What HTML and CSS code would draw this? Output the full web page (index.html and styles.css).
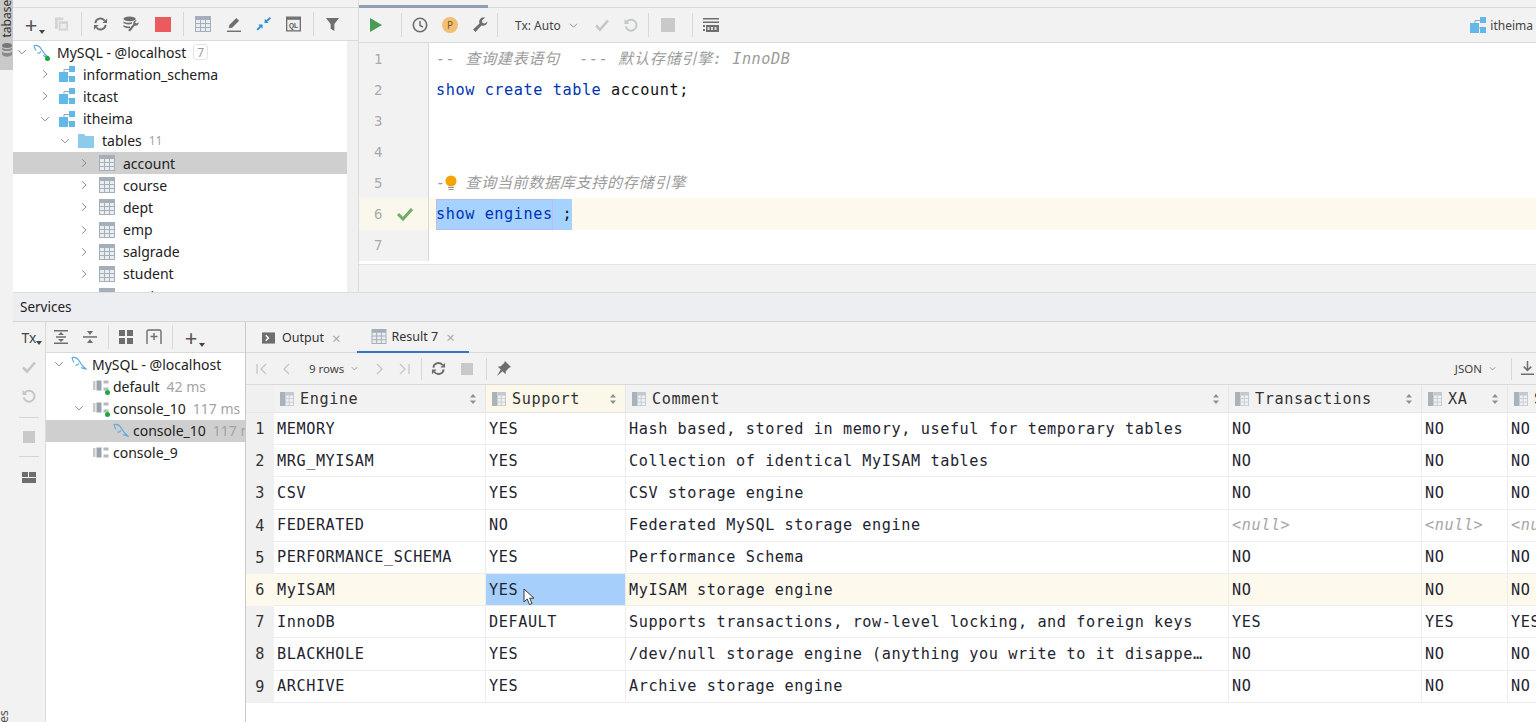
FILE: index.html
```html
<!DOCTYPE html>
<html lang="en">
<head>
<meta charset="utf-8">
<title>DataGrip</title>
<link rel="stylesheet" href="styles.css">
</head>
<body>
<svg class="sprite" width="0" height="0" aria-hidden="true">
  <symbol id="schema" viewBox="0 0 16 16">
    <path d="M5 6V3.5h6M5 11h6" fill="none" stroke="#9aa7b0" stroke-width="1"/>
    <rect x="0" y="6" width="9" height="10" fill="#62b8e8"/>
    <rect x="10" y="0" width="6" height="6" fill="#62b8e8"/>
    <rect x="10" y="10" width="6" height="6" fill="#62b8e8"/>
  </symbol>
  <symbol id="table" viewBox="0 0 16 16">
    <rect x="0" y="0" width="16" height="16" fill="#a5afb9"/>
    <path d="M1 4h4v3H1zM6 4h4v3H6zM11 4h4v3h-4zM1 8h4v3H1zM6 8h4v3H6zM11 8h4v3h-4zM1 12h4v3H1zM6 12h4v3H6zM11 12h4v3h-4z" fill="#e9edf0"/>
  </symbol>
  <symbol id="column" viewBox="0 0 16 16">
    <rect x="0" y="0" width="6" height="16" fill="#aab2ba"/>
    <rect x="6" y="0" width="10" height="16" fill="#c3c9cf"/>
    <path d="M7 4h3v3H7zM11 4h4v3h-4zM7 8h3v3H7zM11 8h4v3h-4zM7 12h3v3H7zM11 12h4v3h-4z" fill="#eef0f2"/>
  </symbol>
  <symbol id="dolphin" viewBox="0 0 16 16">
    <path d="M1 1.5c3.5-.5 6 1 7.5 4 1.2 2.4 3 4.6 6.5 7.5-2-.3-3.600-.7-5-1.500M1 1.500c.3 2 1 3.500 2 5M8 7.500c-1 1.500-2.200 2-3.500 1.500" fill="none" stroke="#62a9dc" stroke-width="1.200"/>
  </symbol>
  <symbol id="console" viewBox="0 0 16 16">
    <rect x="0" y="3" width="2.500" height="9" fill="#c6c9cc"/>
    <path d="M3.500 2.500h5v10h-5z" fill="#9aa3ab"/>
    <rect x="10.500" y="2.500" width="5" height="3" fill="#b3b9be"/>
    <rect x="10.500" y="9.500" width="5" height="3" fill="#b3b9be"/>
  </symbol>
  <symbol id="chev-r" viewBox="0 0 16 16"><path d="M5.500 3l5 5-5 5" fill="none" stroke="#7f8488" stroke-width="1.300"/></symbol>
  <symbol id="chev-d" viewBox="0 0 16 16"><path d="M3 5.500l5 5 5-5" fill="none" stroke="#7f8488" stroke-width="1.300"/></symbol>
  <symbol id="sort" viewBox="0 0 8 12"><path d="M4 1l3 3.500H1zM4 11L1 7.500h6z" fill="#8b8f93"/></symbol>
  <symbol id="check" viewBox="0 0 16 16"><path d="M2 8.500l4 4 8-9" fill="none" stroke="#c4c6c8" stroke-width="2.600"/></symbol>
  <symbol id="undo" viewBox="0 0 16 16"><path d="M4 4.500a5.500 5.500 0 1 1-1.300 5" fill="none" stroke="#c4c6c8" stroke-width="2"/><path d="M1.500 2v5h5z" fill="#c4c6c8"/></symbol>
  <symbol id="refresh" viewBox="0 0 16 16"><path d="M2.500 7A5.500 5.500 0 0 1 12.500 4.500M13.500 9a5.500 5.500 0 0 1-10 2.500" fill="none" stroke="#6e6e6e" stroke-width="2"/><path d="M15 2v5h-5zM1 14V9h5z" fill="#6e6e6e"/></symbol>
</svg>

<div class="app">
  <aside class="strip">
    <div class="strip-tab">
      <span class="strip-label">Database</span>
      <svg class="strip-drum" viewBox="0 0 10 14"><ellipse cx="5" cy="2.500" rx="5" ry="2.500" fill="#777"/><path d="M0 4.500c2 2 8 2 10 0v2c-2 2-8 2-10 0zM0 8.500c2 2 8 2 10 0v3c-2 3-8 3-10 0z" fill="#8a8a8a"/></svg>
    </div>
    <span class="strip-bottom">Services</span>
  </aside>

  <div class="workspace">
    <div class="upper">
      <section class="db-panel">
        <div class="clip-band"></div>
        <div class="toolbar db-toolbar">
          <span class="plus">+<i class="caret"></i></span>
          <svg class="ic ic-copy" viewBox="0 0 16 16"><path d="M1 1h9v3H4v9H1z" fill="#d2d4d6"/><rect x="5" y="5" width="10" height="10" fill="#d2d4d6"/><rect x="7" y="8" width="6" height="5" fill="#eceded"/></svg>
          <span class="sep"></span>
          <svg class="ic"><use href="#refresh"/></svg>
          <svg class="ic ic-wrench" viewBox="0 0 18 18"><ellipse cx="7" cy="3" rx="6.500" ry="2.500" fill="#6e6e6e"/><path d="M.5 5.500c2 2 7 2 9 .8v2c-3 1-7 .7-9-.8zM.5 9.500c2 1.500 4.500 1.800 7 1.300v2c-3 .3-5.500-.3-7-1.300z" fill="#6e6e6e"/><path d="M16.500 6.500a3 3 0 0 1-4 3.500L7.500 16.500l-2-1.500 5.500-6.500a3 3 0 0 1 3.500-4L12.500 7l2 1z" fill="#6e6e6e"/></svg>
          <i class="stop-red"></i>
          <span class="sep"></span>
          <svg class="ic ic-grid"><use href="#table"/></svg>
          <svg class="ic" viewBox="0 0 16 16"><path d="M1 15h15v1.500H1z" fill="#6e6e6e"/><path d="M3 12.500l.5-3.500L11 1.500l3 3L6.500 12z" fill="#6e6e6e"/></svg>
          <svg class="ic" viewBox="0 0 16 16"><path d="M0 12l5-5v3.500h0M15 1L9.500 6.500" fill="none" stroke="#3592c4" stroke-width="0"/><path d="M7 8.500H2.500l1.500 1.500L.5 13.500 2 15l3.500-3.500L7 13zM9 7h4.500L12 5.500 16 2 14.500.5 11 4 9.500 2.500z" fill="#2f8fd0"/></svg>
          <svg class="ic ic-ql" viewBox="0 0 16 16"><rect x=".7" y=".7" width="14.600" height="14.600" fill="#eee" stroke="#6e6e6e" stroke-width="1.400"/><rect x="1" y="1" width="14" height="2.500" fill="#6e6e6e"/><text x="8" y="12" class="ql-text">QL</text></svg>
          <span class="sep"></span>
          <svg class="ic" viewBox="0 0 16 16"><path d="M1 1.500h14L10 8v7.500L6 13V8z" fill="#6e6e6e"/></svg>
        </div>
        <div class="tree">
          <div class="node"><svg class="chev"><use href="#chev-d"/></svg><span class="dolphin-wrap"><svg class="nic"><use href="#dolphin"/></svg><i class="dot"></i></span><span class="host">MySQL - @localhost</span><span class="badge">7</span></div>
          <div class="node lv1"><svg class="chev"><use href="#chev-r"/></svg><svg class="nic"><use href="#schema"/></svg><span>information_schema</span></div>
          <div class="node lv1"><svg class="chev"><use href="#chev-r"/></svg><svg class="nic"><use href="#schema"/></svg><span>itcast</span></div>
          <div class="node lv1"><svg class="chev"><use href="#chev-d"/></svg><svg class="nic"><use href="#schema"/></svg><span>itheima</span></div>
          <div class="node lv2"><svg class="chev"><use href="#chev-d"/></svg><svg class="nic folder" viewBox="0 0 16 14"><path d="M0 0h6l1.500 2H16v12H0z" fill="#8ccbec"/></svg><span>tables</span><span class="count">11</span></div>
          <div class="node lv3 picked"><svg class="chev"><use href="#chev-r"/></svg><svg class="nic"><use href="#table"/></svg><span>account</span></div>
          <div class="node lv3"><svg class="chev"><use href="#chev-r"/></svg><svg class="nic"><use href="#table"/></svg><span>course</span></div>
          <div class="node lv3"><svg class="chev"><use href="#chev-r"/></svg><svg class="nic"><use href="#table"/></svg><span>dept</span></div>
          <div class="node lv3"><svg class="chev"><use href="#chev-r"/></svg><svg class="nic"><use href="#table"/></svg><span>emp</span></div>
          <div class="node lv3"><svg class="chev"><use href="#chev-r"/></svg><svg class="nic"><use href="#table"/></svg><span>salgrade</span></div>
          <div class="node lv3"><svg class="chev"><use href="#chev-r"/></svg><svg class="nic"><use href="#table"/></svg><span>student</span></div>
          <div class="node lv3"><svg class="chev"><use href="#chev-r"/></svg><svg class="nic"><use href="#table"/></svg><span>teacher</span></div>
          <i class="scrollbar"></i>
        </div>
      </section>

      <section class="editor-panel">
        <div class="tab-band"><i class="tab-active"></i></div>
        <div class="toolbar ed-toolbar">
          <svg class="ic ic-run" viewBox="0 0 14 16"><path d="M1 1l12 7-12 7z" fill="#499c54"/></svg>
          <span class="sep"></span>
          <svg class="ic" viewBox="0 0 16 16"><circle cx="8" cy="8" r="6.700" fill="none" stroke="#6e6e6e" stroke-width="1.600"/><path d="M8 4v4.500l3 1.500" fill="none" stroke="#6e6e6e" stroke-width="1.500"/></svg>
          <span class="pill">P</span>
          <svg class="ic" viewBox="0 0 16 16"><path d="M15.500 4.500a4.500 4.500 0 0 1-6 4L3.500 15 1 12.500l6.500-6a4.500 4.500 0 0 1 5.500-6L10 3.500l.5 2.500 2.500.5z" fill="#6e6e6e"/></svg>
          <span class="sep"></span>
          <span class="tx">Tx: Auto</span>
          <svg class="tiny-chev"><use href="#chev-d"/></svg>
          <svg class="ic"><use href="#check"/></svg>
          <svg class="ic"><use href="#undo"/></svg>
          <span class="sep"></span>
          <i class="stop-gray"></i>
          <span class="sep"></span>
          <svg class="ic" viewBox="0 0 16 16"><path d="M0 1h16v1.500H0zM0 4.500h16V6H0z" fill="#6e6e6e"/><path d="M0 8h2v2H0zM0 12h2v2H0z" fill="#6e6e6e"/><rect x="3" y="8" width="13" height="7" fill="#6e6e6e"/><path d="M4.500 10h2v3h-2zM8 10h2v3H8zM11.500 10h2v3h-2z" fill="#ddd"/></svg>
          <span class="schema-tag"><svg class="nic"><use href="#schema"/></svg><span>itheima</span></span>
        </div>
        <div class="code">
          <div class="line"><span class="num">1</span><span class="gut"></span><span class="src cmt">-- 查询建表语句  --- 默认存储引擎: InnoDB</span></div>
          <div class="line"><span class="num">2</span><span class="gut"></span><span class="src"><b>show</b> <b>create</b> <b>table</b> account;</span></div>
          <div class="line"><span class="num">3</span><span class="gut"></span><span class="src"></span></div>
          <div class="line"><span class="num">4</span><span class="gut"></span><span class="src"></span></div>
          <div class="line"><span class="num">5</span><span class="gut"></span><span class="src cmt">-- 查询当前数据库支持的存储引擎</span><svg class="bulb" viewBox="0 0 12 16"><circle cx="6" cy="5.500" r="5.500" fill="#f5a300"/><path d="M3 11.500h6v1H3zM3.500 13.500h5v1h-5z" fill="#8f8f8f"/></svg></div>
          <div class="line current"><span class="num">6</span><span class="gut"><svg class="ok" viewBox="0 0 16 14"><path d="M1 7l5 5 9-10" fill="none" stroke="#6fae66" stroke-width="3"/></svg></span><span class="src"><span class="sel"><span class="sel-word"><b>show</b> <b>engines</b></span> ;</span></span></div>
          <div class="line"><span class="num">7</span><span class="gut"></span><span class="src"></span></div>
        </div>
        <div class="editor-foot"></div>
      </section>
    </div>

    <section class="services">
      <header class="services-head">Services</header>
      <div class="services-body">
        <div class="side-tools">
          <span class="tx-mini">Tx<i class="caret"></i></span>
          <svg class="ic"><use href="#check"/></svg>
          <svg class="ic"><use href="#undo"/></svg>
          <span class="hsep"></span>
          <i class="stop-gray small"></i>
          <span class="hsep"></span>
          <svg class="ic" viewBox="0 0 16 16"><path d="M1 2h6v5H1zM8 2h7v5H8zM1 8h14v5H1z" fill="#6e6e6e"/></svg>
        </div>
        <div class="svc-tree">
          <div class="toolbar svc-toolbar">
            <svg class="ic" viewBox="0 0 16 16"><path d="M1 1h14v1.500H1zM1 13.500h14V15H1zM3 7.200h10v1.500H3z" fill="#6e6e6e"/><path d="M8 3l3 3H5zM8 13l-3-3h6z" fill="#6e6e6e"/></svg>
            <svg class="ic" viewBox="0 0 16 16"><path d="M1 7.200h14v1.500H1z" fill="#6e6e6e"/><path d="M8 6L5 2h6zM8 10l3 4H5z" fill="#6e6e6e"/></svg>
            <span class="sep"></span>
            <span class="groupby"><i></i><i></i><i></i><i></i></span>
            <svg class="ic" viewBox="0 0 16 16"><path d="M1 15V2.500Q1 1 2.500 1h11Q15 1 15 2.500V15M8 4v7M4.500 7.500h7" fill="none" stroke="#6e6e6e" stroke-width="1.400"/></svg>
            <span class="sep"></span>
            <span class="plus">+<i class="caret"></i></span>
          </div>
          <div class="svc-nodes">
            <div class="snode"><svg class="chev"><use href="#chev-d"/></svg><svg class="nic"><use href="#dolphin"/></svg><span>MySQL - @localhost</span></div>
            <div class="snode s1"><span class="dolphin-wrap"><svg class="nic"><use href="#console"/></svg><i class="dot"></i></span><span>default</span><span class="ms">42 ms</span></div>
            <div class="snode s1b"><svg class="chev"><use href="#chev-d"/></svg><span class="dolphin-wrap"><svg class="nic"><use href="#console"/></svg><i class="dot"></i></span><span>console_10</span><span class="ms">117 ms</span></div>
            <div class="snode s2 picked"><svg class="nic"><use href="#dolphin"/></svg><span>console_10</span><span class="ms">117 ms</span></div>
            <div class="snode s1"><svg class="nic"><use href="#console"/></svg><span>console_9</span></div>
          </div>
        </div>
        <div class="results">
          <div class="res-tabs">
            <span class="res-tab"><svg class="tab-ic" viewBox="0 0 14 14"><rect width="14" height="12" y="1" fill="#6e6e6e"/><path d="M4 4l3 3-3 3" fill="none" stroke="#fff" stroke-width="1.500"/></svg>Output<em>×</em></span>
            <span class="res-tab on"><svg class="tab-ic2"><use href="#table"/></svg>Result 7<em>×</em></span>
          </div>
          <div class="toolbar res-toolbar">
            <svg class="ic-n" viewBox="0 0 12 12"><path d="M1 1v10M10 1L5 6l5 5" fill="none" stroke="#c2c4c6" stroke-width="1.200"/></svg>
            <svg class="ic-n" viewBox="0 0 12 12"><path d="M8 1L3 6l5 5" fill="none" stroke="#c2c4c6" stroke-width="1.200"/></svg>
            <span class="rows">9 rows</span><svg class="tiny-chev small-chev"><use href="#chev-d"/></svg>
            <svg class="ic-n" viewBox="0 0 12 12"><path d="M4 1l5 5-5 5" fill="none" stroke="#c2c4c6" stroke-width="1.200"/></svg>
            <svg class="ic-n" viewBox="0 0 12 12"><path d="M11 1v10M2 1l5 5-5 5" fill="none" stroke="#c2c4c6" stroke-width="1.200"/></svg>
            <span class="sep"></span>
            <svg class="ic ic-sm"><use href="#refresh"/></svg>
            <i class="stop-gray small"></i>
            <span class="sep"></span>
            <svg class="ic ic-sm" viewBox="0 0 16 16"><path d="M9.500 0L16 6.500l-2 .8-3.500 3.700-.3 3L2 6l3-.5L8.700 2z" fill="#6e6e6e"/><path d="M5 9l2 2-6 5z" fill="#6e6e6e"/></svg>
            <span class="res-right">
              <span class="json">JSON</span><svg class="tiny-chev small-chev"><use href="#chev-d"/></svg>
              <span class="sep"></span>
              <svg class="ic ic-sm" viewBox="0 0 16 16"><path d="M8 0v9M4 6l4 4 4-4M1 14h14" fill="none" stroke="#6e6e6e" stroke-width="1.600"/></svg>
            </span>
          </div>
          <div class="grid">
            <div class="row head">
              <div class="rn"></div>
              <div class="th"><svg class="cic"><use href="#column"/></svg><span>Engine</span><svg class="sorti"><use href="#sort"/></svg></div>
              <div class="th hot"><svg class="cic"><use href="#column"/></svg><span>Support</span><svg class="sorti"><use href="#sort"/></svg></div>
              <div class="th"><svg class="cic"><use href="#column"/></svg><span>Comment</span><svg class="sorti"><use href="#sort"/></svg></div>
              <div class="th"><svg class="cic"><use href="#column"/></svg><span>Transactions</span><svg class="sorti"><use href="#sort"/></svg></div>
              <div class="th"><svg class="cic"><use href="#column"/></svg><span>XA</span><svg class="sorti"><use href="#sort"/></svg></div>
              <div class="th"><svg class="cic"><use href="#column"/></svg><span>Savepoints</span></div>
            </div>
            <div class="row"><div class="rn">1</div><div class="td">MEMORY</div><div class="td">YES</div><div class="td">Hash based, stored in memory, useful for temporary tables</div><div class="td">NO</div><div class="td">NO</div><div class="td">NO</div></div>
            <div class="row"><div class="rn">2</div><div class="td">MRG_MYISAM</div><div class="td">YES</div><div class="td">Collection of identical MyISAM tables</div><div class="td">NO</div><div class="td">NO</div><div class="td">NO</div></div>
            <div class="row"><div class="rn">3</div><div class="td">CSV</div><div class="td">YES</div><div class="td">CSV storage engine</div><div class="td">NO</div><div class="td">NO</div><div class="td">NO</div></div>
            <div class="row"><div class="rn">4</div><div class="td">FEDERATED</div><div class="td">NO</div><div class="td">Federated MySQL storage engine</div><div class="td nul">&lt;null&gt;</div><div class="td nul">&lt;null&gt;</div><div class="td nul">&lt;null&gt;</div></div>
            <div class="row"><div class="rn">5</div><div class="td">PERFORMANCE_SCHEMA</div><div class="td">YES</div><div class="td">Performance Schema</div><div class="td">NO</div><div class="td">NO</div><div class="td">NO</div></div>
            <div class="row cur"><div class="rn">6</div><div class="td">MyISAM</div><div class="td active">YES<svg class="pointer" viewBox="0 0 12 18"><path d="M1 1v13l3.200-3 2.300 5.500 2.500-1-2.300-5.300H11z" fill="#fff" stroke="#3a3a3a" stroke-width="1"/></svg></div><div class="td">MyISAM storage engine</div><div class="td">NO</div><div class="td">NO</div><div class="td">NO</div></div>
            <div class="row"><div class="rn">7</div><div class="td">InnoDB</div><div class="td">DEFAULT</div><div class="td">Supports transactions, row-level locking, and foreign keys</div><div class="td">YES</div><div class="td">YES</div><div class="td">YES</div></div>
            <div class="row"><div class="rn">8</div><div class="td">BLACKHOLE</div><div class="td">YES</div><div class="td">/dev/null storage engine (anything you write to it disappe…</div><div class="td">NO</div><div class="td">NO</div><div class="td">NO</div></div>
            <div class="row"><div class="rn">9</div><div class="td">ARCHIVE</div><div class="td">YES</div><div class="td">Archive storage engine</div><div class="td">NO</div><div class="td">NO</div><div class="td">NO</div></div>
          </div>
        </div>
      </div>
    </section>
  </div>
</div>
</body>
</html>
```
FILE: styles.css
```css
* { box-sizing: border-box; }
html, body { margin: 0; padding: 0; height: 100%; overflow: hidden; }
body { font-family: "Noto Sans", "Noto Sans CJK SC", sans-serif; font-size: 14px; color: #2b2b2b; background: #f2f2f2; }
.sprite { position: absolute; }
svg { display: block; flex: none; }

.app { display: flex; width: 1536px; height: 722px; overflow: hidden; }

/* left stripe */
.strip { width: 13px; flex: none; background: #f2f2f2; display: flex; flex-direction: column; justify-content: space-between; overflow: hidden; }
.strip-tab { height: 70px; background: #c9c9c9; display: flex; flex-direction: column; align-items: center; overflow: hidden; }
.strip-label { writing-mode: vertical-rl; transform: rotate(180deg); font-size: 12px; line-height: 13px; height: 38px; overflow: hidden; white-space: nowrap; direction: rtl; color: #333; }
.strip-drum { width: 10px; height: 14px; margin-top: 5px; }
.strip-bottom { writing-mode: vertical-rl; transform: rotate(180deg); font-size: 12px; line-height: 8px; height: 12px; overflow: hidden; color: #555; direction: rtl; white-space: nowrap; }

.workspace { flex: 1; min-width: 0; display: flex; flex-direction: column; }
.upper { height: 292px; flex: none; display: flex; }

/* toolbars */
.toolbar { display: flex; align-items: center; background: #f2f2f2; }
.ic { width: 16px; height: 16px; }
.sep { width: 1px; height: 24px; background: #d8d8d8; flex: none; }
.plus { position: relative; font-size: 22px; line-height: 22px; color: #555; width: 16px; text-align: center; }
.caret { position: absolute; right: -6px; bottom: 1px; border: 3px solid transparent; border-top: 4px solid #444; border-bottom: 0; }
.stop-red { width: 16px; height: 15px; background: #ea5a5f; flex: none; }
.stop-gray { width: 16px; height: 16px; background: #c9c9c9; flex: none; }
.stop-gray.small { width: 12px; height: 12px; }
.ql-text { font: bold 7px "Liberation Sans", sans-serif; text-anchor: middle; fill: #555; }

/* db panel */
.db-panel { width: 346px; flex: none; display: flex; flex-direction: column; border-right: 1px solid #dcdcdc; }
.clip-band { height: 8px; flex: none; background: #f2f2f2; border-bottom: 1px solid #dadada; }
.db-toolbar { height: 33px; flex: none; padding-left: 10px; border-bottom: 1px solid #dadada; gap: 15px; }
.db-toolbar .ic { width: 15px; }
.db-toolbar .sep { margin: 0 -4px 0 -3px; }
.ic-wrench { width: 17px !important; height: 17px; }
.ic-grid { width: 16px !important; }
.tree { position: relative; flex: 1; min-height: 0; overflow: hidden; background: #fff; }
.node { height: 22.200px; display: flex; align-items: center; padding-left: 3px; font-size: 14px; white-space: nowrap; color: #222; }
.node.lv1 { padding-left: 26px; }
.node.lv2 { padding-left: 46px; }
.node.lv3 { padding-left: 65px; }
.node.picked { background: #cfcfcf; }
.chev { width: 12px; height: 12px; margin-right: 5px; flex: none; }
.lv1 .chev { margin-right: 8px; }
.lv2 .chev { margin-right: 7px; }
.lv3 .chev { margin-right: 9px; }
.nic { width: 16px; height: 16px; flex: none; }
.folder { height: 14px; }
.nic + span { margin-left: 8px; }
.dolphin-wrap { position: relative; width: 16px; height: 16px; flex: none; }
.dot { position: absolute; right: -1px; bottom: -1px; width: 5px; height: 5px; border-radius: 50%; background: #1fa83a; }
.host { margin-left: 8px; }
.badge { margin-left: 7px; padding: 0 3px; height: 16px; line-height: 15px; font-size: 12px; color: #999; border: 1px solid #e4e4e4; border-radius: 3px; }
.count { margin-left: 7px; font-size: 12px; color: #a3a3a3; }
.scrollbar { position: absolute; right: 0; top: 0; width: 11px; height: 100%; background: #f0f0f0; }
.picked ~ .scrollbar { background: #f0f0f0; }

/* editor */
.editor-panel { flex: 1; min-width: 0; display: flex; flex-direction: column; }
.tab-band { height: 8px; flex: none; position: relative; border-bottom: 1px solid #dadada; background: #f2f2f2; }
.tab-active { position: absolute; left: 0; top: 5px; width: 129px; height: 3px; background: #8f9db3; }
.ed-toolbar { height: 35px; flex: none; padding-left: 10px; border-bottom: 1px solid #dadada; }
.ic-run { width: 14px; margin-right: 9px; }
.ed-toolbar .sep + .ic { margin-left: 10px; }
.pill { width: 16px; height: 16px; margin: 0 14px; border-radius: 50%; background: #f3bf73; color: #7a5a2a; font-size: 10px; line-height: 16px; text-align: center; }
.ed-toolbar .ic + .sep { margin-left: 9px; }
.tx { margin-left: 17px; font-size: 12px; color: #444; }
.tiny-chev { width: 11px; height: 11px; margin-left: 7px; margin-right: 15px; }
.ed-toolbar .tiny-chev + .ic + .ic { margin-left: 13px; }
.ed-toolbar .stop-gray { margin: 0 17px 0 12px; width: 14px; height: 14px; }
.ed-toolbar .sep:nth-last-of-type(1) + .ic { margin-left: 0; }
.schema-tag { margin-left: auto; margin-right: 3px; display: flex; align-items: center; font-size: 12px; color: #444; }
.schema-tag .nic + span { margin-left: 4px; }
.code { height: 221px; flex: none; background: #fff; overflow: hidden; position: relative; }
.line { height: 31.100px; display: flex; align-items: center; position: relative; }
.num { width: 38px; flex: none; align-self: stretch; display: flex; align-items: center; background: #f2f2f2; padding-left: 15px; font: 14px "DejaVu Sans Mono", monospace; color: #aaa; }
.gut { width: 32px; flex: none; align-self: stretch; display: flex; align-items: center; background: #f2f2f2; border-right: 1px solid #d8d8d8; }
.src { padding-left: 7px; font: 15.200px/20px "DejaVu Sans Mono", "Noto Sans CJK SC", monospace; letter-spacing: .58px; white-space: pre; color: #111; }
.src b { font-weight: normal; color: #0033b3; }
.cmt { color: #9b9b9b; font-style: italic; }
.current { background: #fdf9ec; }
.current .num, .current .gut { background: #faf7ec; }
.ok { width: 16px; height: 14px; }
.sel { display: inline-block; background: #a6d2ff; height: 31px; line-height: 31px; }
.sel-word { display: inline-block; height: 31px; outline: 1px solid #c0b8f0; outline-offset: -1px; }
.bulb { position: absolute; left: 86px; top: 8px; width: 12px; height: 17px; background: #fff; }
.editor-foot { flex: 1; background: #f2f2f2; border-top: 1px solid #e4e4e4; }

/* services */
.services { flex: 1; min-height: 0; display: flex; flex-direction: column; }
.services-head { height: 30px; flex: none; background: #eceef1; border-top: 1px solid #dcdcdc; border-bottom: 1px solid #d4d4d4; padding-left: 7px; font-size: 13.500px; line-height: 29px; color: #222; }
.services-body { flex: 1; min-height: 0; display: flex; }
.side-tools { width: 33px; flex: none; background: #f2f2f2; border-right: 1px solid #dadada; display: flex; flex-direction: column; align-items: center; padding-top: 8px; gap: 13px; }
.tx-mini { position: relative; font-size: 14px; line-height: 16px; color: #444; height: 16px; }
.hsep { width: 20px; height: 1px; background: #d4d4d4; }
.side-tools .stop-gray { margin: 0; }
.svc-tree { width: 200px; flex: none; display: flex; flex-direction: column; border-right: 1px solid #c9c9c9; background: #fff; }
.svc-toolbar { height: 31px; flex: none; padding-left: 7px; gap: 13px; border-bottom: 1px solid #dadada; }
.svc-toolbar .sep { margin: 0 -3px; }
.groupby { position: relative; display: grid; grid-template-columns: 6px 6px; gap: 2px; width: 14px; height: 14px; }
.groupby i { background: #6e6e6e; }
.snode { height: 22.200px; display: flex; align-items: center; padding-left: 7px; font-size: 14px; white-space: nowrap; color: #222; overflow: hidden; }
.snode .chev { margin-right: 6px; }
.snode.s1 { padding-left: 47px; }
.snode.s1b { padding-left: 27px; }
.snode.s1b .chev { margin-right: 8px; }
.snode.s2 { padding-left: 67px; }
.snode.s1 .dolphin-wrap + span, .snode.s1b .dolphin-wrap + span { margin-left: 4px; }
.snode.s1 .nic + span { margin-left: 4px; }
.snode.s2 .nic + span { margin-left: 4px; }
.snode.picked { background: #cfcfcf; }
.snode:first-child .nic + span { margin-left: 5px; }
.ms { margin-left: 7px; color: #a3a3a3; }

/* results */
.results { flex: 1; min-width: 0; display: flex; flex-direction: column; background: #fff; }
.res-tabs { height: 31px; flex: none; display: flex; background: #f2f2f2; border-bottom: 1px solid #dadada; padding-left: 16px; }
.res-tab { display: flex; align-items: center; font-size: 12.500px; color: #333; height: 31px; white-space: nowrap; padding-right: 11px; }
.res-tab em { font-style: normal; font-size: 15px; color: #aaa; margin-left: 8px; }
.tab-ic { width: 13px; height: 14px; margin-right: 7px; }
.tab-ic2 { width: 16px; height: 15px; margin-right: 5px; }
.res-tab.on { margin-left: 5px; padding-left: 14px; padding-right: 14px; border-bottom: 2px solid #3574c4; }
.res-toolbar { height: 32px; flex: none; border-bottom: 1px solid #dadada; padding-left: 10px; }
.ic-n { width: 12px; height: 12px; margin-right: 13px; }
.rows { font-size: 11.500px; color: #444; margin-left: 3px; }
.res-toolbar .tiny-chev { width: 9px; height: 9px; margin-left: 6px; margin-right: 14px; }
.res-toolbar .sep { margin-right: 9px; height: 22px; margin-left: -2px; }
.res-toolbar .ic-sm { width: 15px; height: 15px; margin-right: 15px; }
.res-toolbar .stop-gray.small { margin-right: 15px; }
.res-right { margin-left: auto; display: flex; align-items: center; margin-right: -14px; }
.json { font-size: 11.500px; color: #444; }
.res-right .sep { margin-left: 0; margin-right: 8px; }

.grid { flex: 1; background: #fff; overflow: hidden; }
.row { display: grid; grid-template-columns: 28px 212px 140px 603px 193px 86px 60px; height: 32.200px; font: 15.200px "DejaVu Sans Mono", monospace; letter-spacing: .58px; color: #1e2430; }
.row.head { height: 28px; background: #f2f2f2; border-bottom: 1px solid #e6e6e6; color: #333; }
.rn { background: #f0f0f0; display: flex; align-items: center; justify-content: center; color: #333; }
.td { padding-left: 3px; display: flex; align-items: center; white-space: nowrap; overflow: hidden; border-right: 1px solid #ededed; border-bottom: 1px solid #ededed; position: relative; }
.nul { color: #a6a6a6; font-style: italic; }
.th { padding-left: 5px; padding-right: 8px; display: flex; align-items: center; gap: 5px; border-right: 1px solid #e6e6e6; overflow: hidden; white-space: nowrap; }
.th span { flex: 1; }
.th.hot { background: #fbf8ea; }
.cic { width: 16px; height: 14px; }
.sorti { width: 8px; height: 12px; }
.row.cur .td, .row.cur .rn { background: #fdf9ec; }
.row.cur .td.active { background: #a6d0fb; overflow: visible; }
.pointer { position: absolute; left: 37px; top: 14px; width: 12px; height: 18px; }
```
